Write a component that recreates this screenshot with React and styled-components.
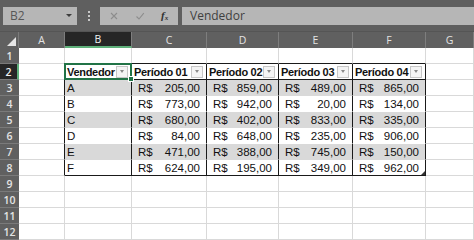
import React from "react";
import styled, { createGlobalStyle, css } from "styled-components";

const GlobalStyle = createGlobalStyle`
  html, body { margin: 0; padding: 0; background: #ffffff; }
  body { width: 474px; height: 240px; overflow: hidden; }
`;

const COLS = ["A", "B", "C", "D", "E", "F", "G"];
const WIDTHS = "19px 46px 67px 75px 72px 74px 73px 1fr";

const rows = [
  ["A", "205,00", "859,00", "489,00", "865,00"],
  ["B", "773,00", "942,00", "20,00", "134,00"],
  ["C", "680,00", "402,00", "833,00", "335,00"],
  ["D", "84,00", "648,00", "235,00", "906,00"],
  ["E", "471,00", "388,00", "745,00", "150,00"],
  ["F", "624,00", "195,00", "349,00", "962,00"],
];
const headers = ["Vendedor", "Período 01", "Período 02", "Período 03", "Período 04"];

function App() {
  const body = [];
  for (let r = 1; r <= 12; r++) {
    body.push(
      <RowHead key={`h${r}`} $active={r === 2}>
        {r}
      </RowHead>
    );
    COLS.forEach((col, c) => {
      const inTable = r >= 2 && r <= 8 && c >= 1 && c <= 5;
      const key = `${col}${r}`;
      if (!inTable) {
        body.push(
          <Cell
            key={key}
            $edgeRight={c === 0 && r >= 2 && r <= 8}
            $edgeBottom={r === 1 && c >= 1 && c <= 5}
          />
        );
        return;
      }
      if (r === 2) {
        body.push(
          <HeadCell key={key} $selected={c === 1}>
            <span>{headers[c - 1]}</span>
            <FilterButton />
          </HeadCell>
        );
        return;
      }
      const data = rows[r - 3];
      const shade = r % 2 === 1;
      const last = r === 8;
      if (c === 1) {
        body.push(
          <DataCell key={key} $shade={shade} $last={last}>
            {data[0]}
          </DataCell>
        );
      } else {
        body.push(
          <MoneyCell key={key} $shade={shade} $last={last} $corner={last && c === 5}>
            <span>R$</span>
            <span>{data[c - 1]}</span>
          </MoneyCell>
        );
      }
    });
  }

  return (
    <>
      <GlobalStyle />
      <Window>
        <FormulaBar>
          <NameBox>
            <span>B2</span>
            <Caret />
          </NameBox>
          <Grip>
            <i />
            <i />
            <i />
          </Grip>
          <Actions>
            <ActionIcon viewBox="0 0 10 10" $faded>
              <path d="M2 2 L8 8 M8 2 L2 8" />
            </ActionIcon>
            <ActionIcon viewBox="0 0 10 10" $faded>
              <path d="M1.5 5.5 L4 8 L8.8 2.2" />
            </ActionIcon>
            <Fx>
              f<sub>x</sub>
            </Fx>
          </Actions>
          <FormulaInput>Vendedor</FormulaInput>
        </FormulaBar>
        <Sheet>
          <Corner>
            <svg width="9" height="9" viewBox="0 0 9 9">
              <path d="M9 0 L9 9 L0 9 Z" fill="#e6e6e6" />
            </svg>
          </Corner>
          {COLS.map((col) => (
            <ColHead key={col} $active={col === "B"}>
              {col}
            </ColHead>
          ))}
          {body}
        </Sheet>
      </Window>
    </>
  );
}

const Window = styled.div`
  width: 474px;
  height: 240px;
  overflow: hidden;
  font-family: "Open Sans", "Noto Sans", sans-serif;
`;

const FormulaBar = styled.div`
  height: 32px;
  background: #5f5f5f;
  display: flex;
  align-items: center;
  padding-left: 3px;
  box-sizing: border-box;
  border-bottom: 1px solid #555555;
`;

const NameBox = styled.div`
  width: 74px;
  height: 18px;
  background: #b6b6b6;
  display: flex;
  align-items: center;
  justify-content: space-between;
  padding: 0 5px 0 7px;
  box-sizing: border-box;
  color: #575757;
  font-size: 12px;
`;

const Caret = styled.span`
  width: 0;
  height: 0;
  border-left: 3px solid transparent;
  border-right: 3px solid transparent;
  border-top: 3px solid #3d3d3d;
`;

const Grip = styled.div`
  width: 23px;
  display: flex;
  flex-direction: column;
  align-items: center;
  gap: 2px;
  i {
    width: 2px;
    height: 2px;
    background: #c8c8c8;
  }
`;

const Actions = styled.div`
  width: 78px;
  height: 18px;
  background: #b6b6b6;
  display: flex;
  align-items: center;
  padding-left: 9px;
  gap: 16px;
  box-sizing: border-box;
`;

const ActionIcon = styled.svg`
  width: 10px;
  height: 10px;
  fill: none;
  stroke: ${(p) => (p.$faded ? "#8d8d8d" : "#333")};
  stroke-width: 1.1;
`;

const Fx = styled.span`
  font-family: "Liberation Serif", serif;
  font-style: italic;
  font-weight: bold;
  font-size: 11px;
  color: #2f2f2f;
  sub {
    font-size: 7px;
    vertical-align: -1px;
  }
`;

const FormulaInput = styled.div`
  flex: 1;
  height: 18px;
  margin-left: 4px;
  background: #b6b6b6;
  color: #3f3f3f;
  font-size: 12px;
  display: flex;
  align-items: center;
  padding-left: 8px;
`;

const Sheet = styled.div`
  display: grid;
  grid-template-columns: ${WIDTHS};
  grid-auto-rows: 16px;
  font-family: "Liberation Sans", Arial, sans-serif;
  font-size: 11.5px;
  color: #111;
`;

const headBase = css`
  background: #606060;
  color: #e4e4e4;
  font-family: "Open Sans", "Noto Sans", sans-serif;
  font-size: 10.5px;
  display: flex;
  align-items: center;
  justify-content: center;
  box-sizing: border-box;
`;

const Corner = styled.div`
  ${headBase};
  justify-content: flex-end;
  align-items: flex-end;
  padding: 0 2px 2px 0;
  border-right: 1px solid #7a7a7a;
`;

const ColHead = styled.div`
  ${headBase};
  border-right: 1px solid #7e7e7e;
  ${(p) =>
    p.$active &&
    css`
      background: #262626;
      color: #f2f2f2;
      border-bottom: 2px solid #5fb07a;
    `}
`;

const RowHead = styled.div`
  ${headBase};
  font-weight: 600;
  border-bottom: 1px solid #7a7a7a;
  ${(p) =>
    p.$active &&
    css`
      background: #262626;
      color: #f2f2f2;
      border-right: 2px solid #5fb07a;
    `}
`;

const Cell = styled.div`
  box-sizing: border-box;
  border-right: 1px solid ${(p) => (p.$edgeRight ? "#1a1a1a" : "#d9d9d9")};
  border-bottom: 1px solid ${(p) => (p.$edgeBottom ? "#1a1a1a" : "#d9d9d9")};
`;

const tableCell = css`
  position: relative;
  box-sizing: border-box;
  border-right: 1px solid #1a1a1a;
  background: ${(p) => (p.$shade ? "#d9d9d9" : "#ffffff")};
  border-bottom: 1px solid ${(p) => (p.$last ? "#1a1a1a" : p.$shade ? "#d9d9d9" : "#ffffff")};
  display: flex;
  align-items: center;
  white-space: nowrap;
`;

const HeadCell = styled.div`
  ${tableCell};
  background: #ffffff;
  border-bottom: 1px solid #1a1a1a;
  font-weight: bold;
  font-size: 11px;
  letter-spacing: -0.3px;
  justify-content: space-between;
  padding: 0 3px 0 2px;
  ${(p) =>
    p.$selected &&
    css`
      &::after {
        content: "";
        position: absolute;
        inset: -1px -1px -1px -1px;
        border: 2px solid #217346;
      }
      &::before {
        content: "";
        position: absolute;
        right: -3px;
        bottom: -3px;
        width: 4px;
        height: 4px;
        background: #217346;
        border: 1px solid #ffffff;
        z-index: 1;
      }
    `}
`;

const FilterButton = styled.span`
  flex: none;
  width: 10px;
  height: 10px;
  border: 1px solid #c6c6c6;
  background: #f4f4f4;
  display: flex;
  align-items: center;
  justify-content: center;
  &::after {
    content: "";
    border-left: 2.5px solid transparent;
    border-right: 2.5px solid transparent;
    border-top: 3px solid #8a8a8a;
  }
`;

const DataCell = styled.div`
  ${tableCell};
  padding-left: 2px;
`;

const MoneyCell = styled.div`
  ${tableCell};
  justify-content: space-between;
  padding: 0 6px;
  ${(p) =>
    p.$corner &&
    css`
      &::after {
        content: "";
        position: absolute;
        right: 0;
        bottom: 0;
        border-left: 4px solid transparent;
        border-bottom: 4px solid #333;
      }
    `}
`;

export default App;
